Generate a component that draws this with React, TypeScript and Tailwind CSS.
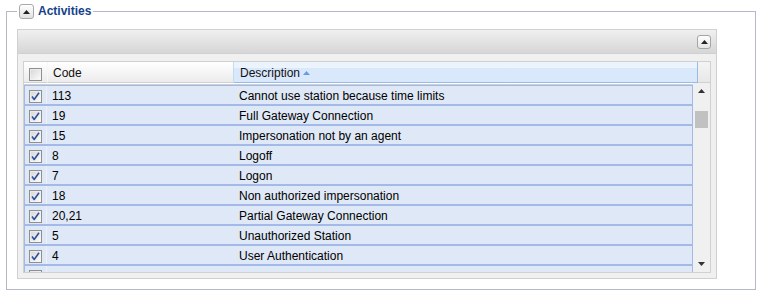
import React from "react";

const rows: [string, string][] = [
  ["113", "Cannot use station because time limits"],
  ["19", "Full Gateway Connection"],
  ["15", "Impersonation not by an agent"],
  ["8", "Logoff"],
  ["7", "Logon"],
  ["18", "Non authorized impersonation"],
  ["20,21", "Partial Gateway Connection"],
  ["5", "Unauthorized Station"],
  ["4", "User Authentication"],
  ["", ""],
];

function Check({ checked }: { checked: boolean }) {
  return (
    <svg width="13" height="13" viewBox="0 0 13 13" className="block shrink-0">
      <defs>
        <linearGradient id="cbg" x1="0" y1="0" x2="1" y2="1">
          <stop offset="0" stopColor="#d4d4d4" />
          <stop offset="1" stopColor="#ffffff" />
        </linearGradient>
      </defs>
      <rect x="0.5" y="0.5" width="12" height="12" fill="url(#cbg)" stroke="#8e8f8f" />
      <rect x="1.5" y="1.5" width="10" height="10" fill="none" stroke="#f4f4f4" strokeWidth="1" opacity="0.6" />
      {checked && (
        <path d="M3 6.5 L5.2 9.5 L10 2.8" fill="none" stroke="#2f4f9f" strokeWidth="1.6" strokeLinejoin="round" />
      )}
    </svg>
  );
}

function ToolBtn() {
  return (
    <div className="w-[14px] h-[14px] rounded-[3px] border border-[#a5a5a5] bg-gradient-to-b from-[#ffffff] to-[#e4e4e4] flex items-center justify-center shrink-0">
      <svg width="7" height="4" viewBox="0 0 7 4" className="block">
        <path d="M0 4 L3.5 0 L7 4 Z" fill="#222" />
      </svg>
    </div>
  );
}

export default function App() {
  return (
    <div
      className="w-[763px] h-[300px] bg-white pt-[4px] pl-[6px]"
      style={{ fontFamily: '"Liberation Sans", Arial, sans-serif' }}
    >
      <fieldset className="w-[750px] border border-[#b5b8c8] px-[10px] pb-[10px]">
        <legend className="px-[2px]">
          <div className="flex items-center gap-[4px] h-[15px]">
            <div className="w-[15px] h-[15px] rounded-[3px] border border-[#a9a9a9] bg-gradient-to-b from-[#ffffff] to-[#e2e2e2] flex items-center justify-center">
              <svg width="7" height="4" viewBox="0 0 7 4" className="block">
                <path d="M0 4 L3.5 0 L7 4 Z" fill="#222" />
              </svg>
            </div>
            <span className="text-[12px] leading-[15px] font-bold text-[#15428b]">Activities</span>
          </div>
        </legend>
        <div className="mt-[10px] w-[700px] border border-[#d0d0d0] bg-[#f0f0f0] flex flex-col">
          <div className="h-[24px] border-b border-[#d0d0d0] bg-gradient-to-b from-[#f0f0f0] to-[#d6d6d6] flex items-center justify-end pr-[5px]">
            <ToolBtn />
          </div>
          <div className="pt-[7px] pb-[5px] px-[5px]">
            <div className="h-[212px] border border-[#d0d0d0] bg-white flex flex-col">
              {/* header */}
              <div className="h-[21px] shrink-0 flex text-[12px] text-[#111]">
                <div className="w-[24px] border-r border-b border-r-[#f7f7f7] border-b-[#d0d0d0] bg-gradient-to-b from-[#ffffff] to-[#ececec] flex items-start pt-[6px] pl-[5px]">
                  <Check checked={false} />
                </div>
                <div className="w-[186px] border-r border-b border-r-[#c6d8f2] border-b-[#d0d0d0] bg-gradient-to-b from-[#ffffff] to-[#ececec] flex items-center pt-[1px] pl-[5px]">
                  Code
                </div>
                <div className="w-[464px] border-r border-b border-r-[#99bbe8] border-b-[#99bbe8] bg-gradient-to-b from-[#ebf3fd] from-30% to-[#d9e8fb] to-30% flex items-center pt-[1px] pl-[6px]">
                  Description
                  <svg width="7" height="4" viewBox="0 0 7 4" className="block ml-[3px]">
                    <path d="M0 4 L3.5 0 L7 4 Z" fill="#6a9be0" />
                  </svg>
                </div>
                <div className="flex-1 border-b border-[#d0d0d0] bg-gradient-to-b from-[#f4f4f4] to-[#e8e8e8]" />
              </div>
              {/* body */}
              <div className="flex-1 min-h-0 flex">
                <div className="w-[669px] flex flex-col overflow-hidden">
                  <div className="h-[1px] shrink-0 bg-white" />
                  <div className="h-[1px] shrink-0 bg-[#cfcfcf]" />
                  {rows.map(([code, desc], i) => (
                    <div
                      key={i}
                      className="h-[20px] shrink-0 border border-[#a3bae9] bg-[#dfe8f6] flex text-[12px] text-black"
                    >
                      <div className="w-[22px] border-r border-[#edf2fa] flex items-start pt-[4px] pl-[4px]">
                        <Check checked={true} />
                      </div>
                      <div className="w-[186px] flex items-center pt-[2px] pl-[5px]">{code}</div>
                      <div className="flex-1 flex items-center pt-[2px] pl-[6px]">{desc}</div>
                    </div>
                  ))}
                </div>
                <div className="flex-1 bg-[#f0f0f0] flex flex-col items-center">
                  <div className="h-[16px] w-full flex items-center justify-center">
                    <svg width="7" height="4" viewBox="0 0 7 4" className="block">
                      <path d="M0 4 L3.5 0 L7 4 Z" fill="#333" />
                    </svg>
                  </div>
                  <div className="mt-[12px] w-[13px] h-[17px] bg-[#c1c1c1]" />
                  <div className="flex-1" />
                  <div className="h-[17px] w-full flex items-center justify-center">
                    <svg width="7" height="4" viewBox="0 0 7 4" className="block">
                      <path d="M0 0 L3.5 4 L7 0 Z" fill="#333" />
                    </svg>
                  </div>
                </div>
              </div>
            </div>
          </div>
        </div>
      </fieldset>
    </div>
  );
}
